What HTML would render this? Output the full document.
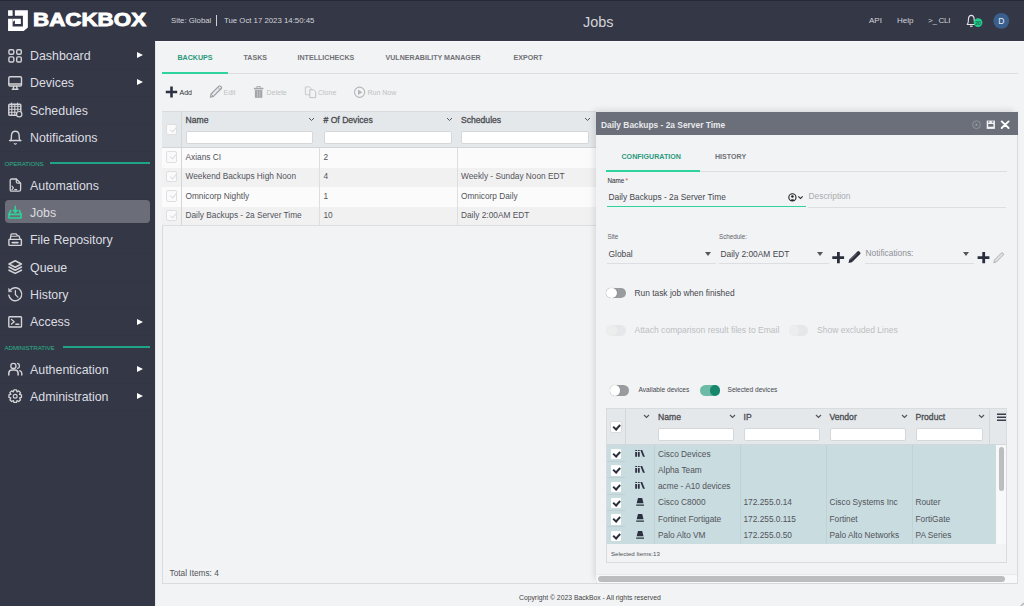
<!DOCTYPE html>
<html><head><meta charset="utf-8">
<style>
*{margin:0;padding:0;box-sizing:border-box}
html,body{width:1024px;height:606px;overflow:hidden;background:#f2f3f5;font-family:"Liberation Sans",sans-serif}
.a{position:absolute;white-space:nowrap}
#top{position:absolute;left:0;top:0;width:1024px;height:41px;background:#343746;border-top:1px solid #262834}
#side{position:absolute;left:0;top:41px;width:155px;height:565px;background:#343746}
.nav{position:absolute;left:0;width:155px;height:27px;border-bottom:1px solid #31343f}
.nt{left:30px;font-size:12.4px;line-height:14px;color:#dcdde1}
.ar{left:137px;width:0;height:0;border-left:6.4px solid #fff;border-top:3.85px solid transparent;border-bottom:3.85px solid transparent}
.nav svg{position:absolute;left:8px;top:6px}
.sec{position:absolute;left:4.5px;font-size:6.2px;color:#2bb38a;letter-spacing:-0.1px}
.secl{position:absolute;height:1.3px;background:#1fa583}
.tab{font-size:7.1px;font-weight:bold;color:#707175}
.tb{top:88.5px;font-size:7px;color:#c0c1c4}
.gh{font-size:8.6px;color:#4a4c52;-webkit-text-stroke:0.3px #4a4c52}
.gr{font-size:8.3px;color:#515359}
.fi{height:13px;background:#fff;border:1px solid #d5d8db;border-radius:2px}
.ck{width:11px;height:11.5px;background:#fafafa;border:1px solid #dedfe1;border-radius:2px}
.ck:after{content:"";position:absolute;left:2.6px;top:2.4px;width:5px;height:2.6px;border-left:1px solid #dcdde0;border-bottom:1px solid #dcdde0;transform:rotate(-50deg)}
.lb{font-size:6.3px;color:#606267}
.in{font-size:8.4px;color:#45474d}
.dd{width:0;height:0;border-top:4px solid #55575c;border-left:3.5px solid transparent;border-right:3.5px solid transparent}
.tg{width:19.5px;height:10.5px;border-radius:6px}
.tg i{position:absolute;left:0;top:0;width:10.5px;height:10.5px;border-radius:50%;background:#fff;box-shadow:0 0 1px rgba(0,0,0,.3)}
.ckd{width:10.4px;height:10.4px;background:#fff;border-radius:1px}
.ckd:after{content:"";position:absolute;left:2.3px;top:2.2px;width:5.4px;height:2.7px;border-left:2.1px solid #2b2e3c;border-bottom:2.1px solid #2b2e3c;transform:rotate(-48deg)}
</style></head><body>
<div id="top"></div>
<div id="side"></div>
<!-- logo -->
<svg class="a" style="left:0;top:0" width="160" height="41" viewBox="0 0 160 41">
<g fill="#fff">
<rect x="8.06" y="10.27" width="4.54" height="5.57"/>
<path d="M14.87 10.27 H27.86 V27.38 L23.7 30.89 H8.06 V18.72 H12.6 V26.56 H22.9 V15.84 H14.87 Z"/>
<path d="M12.6 18.72 H20.85 V24.08 H14.87 V20.37 L12.6 22 Z"/>
</g>
<text x="33" y="26.5" font-family="Liberation Sans" font-weight="bold" font-size="18.5" fill="#fff" stroke="#fff" stroke-width="0.9" transform="translate(33 0) scale(1.21 1) translate(-33 0)">BACKBOX</text>
</svg>
<div class="a" style="left:171px;top:16px;font-size:7.8px;color:#d2d3d8">Site: Global</div>
<div class="a" style="left:216px;top:15px;width:1px;height:11px;background:#cfd0d4"></div>
<div class="a" style="left:224px;top:16px;font-size:7.8px;color:#d2d3d8">Tue Oct 17 2023 14:50:45</div>
<div class="a" style="left:582.7px;top:12.6px;font-size:15.5px;color:#d3d4d8;transform:scaleX(0.93);transform-origin:0 0">Jobs</div>
<div class="a" style="left:869px;top:16px;font-size:8px;color:#d2d3d8">API</div>
<div class="a" style="left:897px;top:16px;font-size:8px;color:#d2d3d8">Help</div>
<div class="a" style="left:928px;top:16px;font-size:8px;color:#d2d3d8;letter-spacing:-0.25px">&gt;_ CLI</div>


<!-- main content -->
<div class="a" style="left:155px;top:41px;width:869px;height:565px;background:#f2f3f5;border-left:1px solid #e4e5e8;border-top:1px solid #f7f8f9"></div>
<div class="a tab" style="left:177.5px;top:54.3px;color:#2a9a7d">BACKUPS</div>
<div class="a tab" style="left:243.5px;top:54.3px">TASKS</div>
<div class="a tab" style="left:297.5px;top:54.3px">INTELLICHECKS</div>
<div class="a tab" style="left:385.5px;top:54.3px">VULNERABILITY MANAGER</div>
<div class="a tab" style="left:513.5px;top:54.3px">EXPORT</div>
<div class="a" style="left:162px;top:73px;width:856px;height:1px;background:#dcdee1"></div>
<div class="a" style="left:162px;top:72px;width:66px;height:2px;background:#2ed49c"></div>
<!-- toolbar -->
<svg class="a" style="left:165px;top:86px" width="13" height="12" viewBox="0 0 13 12"><path d="M5.2 0.6h2.6v4.1h4.4v2.6H7.8v4.1H5.2V7.3H0.8V4.7h4.4z" fill="#2d3142"/></svg>
<div class="a tb" style="left:179.5px;color:#333">Add</div>
<div class="a tb" style="left:223.5px">Edit</div>
<div class="a tb" style="left:266.5px">Delete</div>
<div class="a tb" style="left:318px">Clone</div>
<div class="a tb" style="left:367.5px">Run Now</div>

<svg class="a" style="left:200px;top:80px" width="200" height="22" viewBox="200 80 200 22">
<path d="M210.4 97.2 L211 94 L218.9 86.1 A1.1 1.1 0 0 1 220.5 86.1 L221.3 86.9 A1.1 1.1 0 0 1 221.3 88.5 L213.4 96.4 Z" fill="#e6e7e9" stroke="#9d9ea3" stroke-width="1.1" stroke-linejoin="round"/>
<path d="M211 94 L213.4 96.4 M217.8 87.2 L220.2 89.6" stroke="#9d9ea3" stroke-width="0.9"/>
<path d="M253.9 88.6 H263.3" stroke="#a3a4a8" stroke-width="1.6"/>
<path d="M256.8 87.8 V86.6 H260.4 V87.8" stroke="#a3a4a8" stroke-width="0.9" fill="none"/>
<rect x="254.9" y="90.1" width="7.4" height="7.7" fill="#a3a4a8"/>
<path d="M257.4 91 V97 M259.8 91 V97" stroke="#c6c7ca" stroke-width="0.9"/>
<path d="M305.4 86.9 H309.4 L311.3 88.8 V94.7 H305.4 Z" fill="none" stroke="#c8c9cc" stroke-width="1"/>
<path d="M309.8 89.8 H313.8 L315.7 91.7 V97.6 H309.8 Z" fill="#f2f3f5" stroke="#c0c1c4" stroke-width="1"/>
<circle cx="359.6" cy="92.25" r="5.1" fill="none" stroke="#b5b6ba" stroke-width="1.1"/>
<path d="M358 89.6 L362.3 92.25 L358 94.9 Z" fill="#b5b6ba"/>
</svg>

<!-- main grid -->
<div class="a" style="left:162px;top:111px;width:856px;height:472.8px;border:1px solid #d9dbde;border-top:0"></div>
<div class="a" style="left:162px;top:111px;width:434px;height:37px;background:#e4e8ea;border-top:1px solid #d8dcdf;border-bottom:1px solid #d3d7da"></div>
<div class="a" style="left:181px;top:111px;width:1px;height:114px;background:#d3d7da"></div>
<div class="a" style="left:319px;top:148px;width:1px;height:77px;background:#dcdfe2"></div>
<div class="a" style="left:457px;top:148px;width:1px;height:77px;background:#dcdfe2"></div>
<div class="a ck" style="left:166px;top:123.5px"></div>
<div class="a gh" style="left:185.5px;top:114.8px">Name</div>
<div class="a gh" style="left:323.5px;top:114.8px"># Of Devices</div>
<div class="a gh" style="left:461px;top:114.8px">Schedules</div>
<svg class="a" style="left:307.7px;top:116.5px" width="7" height="5" viewBox="0 0 7 5"><path d="M1 1l2.5 2.5L6 1" stroke="#55575c" stroke-width="1" fill="none"/></svg>
<svg class="a" style="left:445.7px;top:116.5px" width="7" height="5" viewBox="0 0 7 5"><path d="M1 1l2.5 2.5L6 1" stroke="#55575c" stroke-width="1" fill="none"/></svg>
<svg class="a" style="left:583.7px;top:116.5px" width="7" height="5" viewBox="0 0 7 5"><path d="M1 1l2.5 2.5L6 1" stroke="#55575c" stroke-width="1" fill="none"/></svg>
<div class="a fi" style="left:185.5px;top:131px;width:127.5px"></div>
<div class="a fi" style="left:323.5px;top:131px;width:128px"></div>
<div class="a fi" style="left:461px;top:131px;width:127.5px"></div>
<div class="a" style="left:162px;top:148px;width:434px;height:19.5px;background:#fbfbfb"></div>
<div class="a" style="left:162px;top:167.5px;width:434px;height:19.5px;background:#f1f1f2"></div>
<div class="a" style="left:162px;top:187px;width:434px;height:19.5px;background:#fbfbfb"></div>
<div class="a" style="left:162px;top:206.5px;width:434px;height:19px;background:#f1f1f2;border-bottom:1px solid #dcdfe2"></div>
<div class="a" style="left:181px;top:148px;width:1px;height:77px;background:#d3d7da"></div>
<div class="a" style="left:319px;top:148px;width:1px;height:77px;background:#dcdfe2"></div>
<div class="a" style="left:457px;top:148px;width:1px;height:77px;background:#dcdfe2"></div>
<div class="a ck" style="left:166px;top:151px"></div>
<div class="a ck" style="left:166px;top:170.5px"></div>
<div class="a ck" style="left:166px;top:190px"></div>
<div class="a ck" style="left:166px;top:209.5px"></div>
<div class="a gr" style="left:185.5px;top:151.5px">Axians CI</div><div class="a gr" style="left:323.5px;top:151.5px">2</div>
<div class="a gr" style="left:185.5px;top:171px">Weekend Backups High Noon</div><div class="a gr" style="left:323.5px;top:171px">4</div><div class="a gr" style="left:461px;top:171px">Weekly - Sunday Noon EDT</div>
<div class="a gr" style="left:185.5px;top:190.5px">Omnicorp Nightly</div><div class="a gr" style="left:323.5px;top:190.5px">1</div><div class="a gr" style="left:461px;top:190.5px">Omnicorp Daily</div>
<div class="a gr" style="left:185.5px;top:210px">Daily Backups - 2a Server Time</div><div class="a gr" style="left:323.5px;top:210px">10</div><div class="a gr" style="left:461px;top:210px">Daily 2:00AM EDT</div>
<div class="a gr" style="left:169.5px;top:568px">Total Items: 4</div>
<div class="a" style="left:519px;top:594.3px;font-size:6.8px;color:#444">Copyright © 2023 BackBox - All rights reserved</div>


<!-- right panel -->
<div class="a" style="left:596px;top:112px;width:422px;height:471px;background:#f2f3f5;border-right:1px solid #d9dbde;border-bottom:1px solid #d9dbde;box-shadow:-3px -3px 6px -1px rgba(0,0,0,0.11)"></div>
<div class="a" style="left:596px;top:112px;width:422px;height:22.5px;background:#6b6f7a"></div>
<div class="a" style="left:601px;top:119.8px;font-size:8.4px;font-weight:bold;color:#e8e9ec">Daily Backups - 2a Server Time</div>
<div class="a tab" style="left:621.5px;top:153.3px;color:#2a9a7d">CONFIGURATION</div>
<div class="a tab" style="left:715px;top:153.3px">HISTORY</div>
<div class="a" style="left:606px;top:171px;width:401px;height:1px;background:#dcdee1"></div>
<div class="a" style="left:606px;top:170px;width:94px;height:2px;background:#2ed49c"></div>
<div class="a lb" style="left:607.5px;top:177px;color:#3f4146;-webkit-text-stroke:0.1px #3f4146">Name<span style="color:#e0413a;-webkit-text-stroke:0;margin-left:1.2px">*</span></div>
<div class="a in" style="left:608.5px;top:192px">Daily Backups - 2a Server Time</div>
<div class="a" style="left:607px;top:205.5px;width:198.5px;height:1.6px;background:#2ed49c"></div>
<div class="a in" style="left:808.5px;top:191px;color:#a9abaf">Description</div>
<div class="a" style="left:808px;top:206.5px;width:198px;height:1px;background:#dcdee1"></div>
<div class="a lb" style="left:607.5px;top:233px">Site</div>
<div class="a lb" style="left:719px;top:233px">Schedule:</div>
<div class="a in" style="left:608.5px;top:249px">Global</div>
<div class="a dd" style="left:705px;top:251.5px"></div>
<div class="a" style="left:607px;top:262.5px;width:109px;height:1px;background:#dcdee1"></div>
<div class="a in" style="left:720.5px;top:249px">Daily 2:00AM EDT</div>
<div class="a dd" style="left:817px;top:251.5px"></div>
<div class="a" style="left:719px;top:262.5px;width:110px;height:1px;background:#dcdee1"></div>
<div class="a in" style="left:865.5px;top:248px;color:#8e9095">Notifications:</div>
<div class="a dd" style="left:962.5px;top:251.5px"></div>
<div class="a" style="left:865px;top:262.5px;width:109px;height:1px;background:#dcdee1"></div>

<svg class="a" style="left:780px;top:185px" width="240" height="85" viewBox="780 185 240 85">
<circle cx="792.4" cy="197.4" r="3.6" fill="none" stroke="#222" stroke-width="1.1"/>
<circle cx="792.4" cy="196.4" r="1.25" fill="#222"/>
<path d="M789.9 200.2 Q792.4 198.2 794.9 200.2 Q792.4 201.6 789.9 200.2 Z" fill="#222"/>
<path d="M798.3 196.3 L800.5 198.5 L802.7 196.3" fill="none" stroke="#333" stroke-width="1.1"/>
<path d="M837 251.9 h2.8 v4.3 h4.3 v2.8 h-4.3 v4.2 h-2.8 v-4.2 h-4.7 v-2.8 h4.7z" fill="#2b2e3c"/>
<path d="M848.5 263 L849.3 259.6 L857.4 251.6 A1.3 1.3 0 0 1 859.3 251.6 L860 252.3 A1.3 1.3 0 0 1 860 254.2 L851.9 262.2 Z" fill="#2b2e3c"/>
<path d="M850.6 259.8 L856.9 253.5" stroke="#9a9ca3" stroke-width="0.6"/>
<path d="M982.3 251.9 h2.8 v4.3 h4.3 v2.8 h-4.3 v4.2 h-2.8 v-4.2 h-4.7 v-2.8 h4.7z" fill="#2b2e3c"/>
<path d="M993.8 262.8 L994.4 260 L1001.3 253 A1 1 0 0 1 1002.8 253 L1003.3 253.5 A1 1 0 0 1 1003.3 255 L996.4 262 Z" fill="#dcdde0" stroke="#a8aaae" stroke-width="0.8"/>
</svg>

<!-- toggles -->
<div class="a tg" style="left:606px;top:287.5px;background:#9a9b9e"><i></i></div>
<div class="a in" style="left:634.5px;top:287.5px;color:#45474d">Run task job when finished</div>
<div class="a tg" style="left:606px;top:325px;background:#e6e7e9"><i style="background:#eceded;box-shadow:none"></i></div>
<div class="a in" style="left:634.5px;top:325px;color:#bdbec1;font-size:8.55px">Attach comparison result files to Email</div>
<div class="a tg" style="left:788.5px;top:325px;background:#e6e7e9"><i style="background:#eceded;box-shadow:none"></i></div>
<div class="a in" style="left:817px;top:325px;color:#bdbec1;font-size:8.55px">Show excluded Lines</div>
<div class="a tg" style="left:609.5px;top:385px;background:#9a9b9e"><i></i></div>
<div class="a" style="left:638.5px;top:386px;font-size:6.6px;color:#45474d">Available devices</div>
<div class="a tg" style="left:699.5px;top:385px;background:#6dbba7"><i style="left:10px;background:#17876b;box-shadow:none"></i></div>
<div class="a" style="left:727.5px;top:386px;font-size:6.6px;color:#45474d">Selected devices</div>



<svg class="a" style="left:965px;top:114px" width="50" height="20" viewBox="965 114 50 20">
<circle cx="976.5" cy="124.7" r="3.9" fill="none" stroke="#9a9da5" stroke-width="0.8"/>
<path d="M975.6 123 L978 124.7 L975.6 126.4 Z" fill="#9a9da5"/>
<rect x="986.7" y="120.6" width="8.2" height="8.3" fill="#f4f4f6"/>
<rect x="988.2" y="124" width="5.2" height="2.7" fill="#6b6f7a"/>
<rect x="988.2" y="121.4" width="1.2" height="1.3" fill="#6b6f7a"/>
<rect x="991.8" y="121.4" width="1.6" height="1.3" fill="#6b6f7a"/>
<path d="M1001.7 121.4 L1008.6 128 M1008.6 121.4 L1001.7 128" stroke="#fff" stroke-width="1.9" stroke-linecap="round"/>
</svg>

<!-- device grid -->
<div class="a" style="left:606px;top:408px;width:401px;height:155px;border:1px solid #d9dcdf;background:#f2f3f5"></div>
<div class="a" style="left:607px;top:409px;width:399px;height:36px;background:#e4e8ea;border-bottom:1px solid #d3d7da"></div>
<div class="a" style="left:625px;top:409px;width:1px;height:135px;background:#d3d7da"></div>
<div class="a" style="left:989px;top:409px;width:1px;height:36px;background:#d3d7da"></div>
<div class="a" style="left:607px;top:445px;width:389px;height:99px;background:#c9dce0"></div>
<div class="a" style="left:996px;top:445px;width:10px;height:99px;background:#f7f8f9"></div>
<div class="a" style="left:999px;top:446.5px;width:5px;height:44.5px;border-radius:3px;background:#bcbdbf"></div>
<div class="a ckd" style="left:610.8px;top:421.5px;box-shadow:0 0 0 0.8px #d5d8db"></div>
<svg class="a" style="left:643px;top:413.5px" width="7" height="5" viewBox="0 0 7 5"><path d="M1 1l2.5 2.5L6 1" stroke="#55575c" stroke-width="1.2" fill="none"/></svg>
<div class="a gh" style="left:658px;top:412px">Name</div>
<div class="a gh" style="left:743.5px;top:412px">IP</div>
<div class="a gh" style="left:829.5px;top:412px">Vendor</div>
<div class="a gh" style="left:915.5px;top:412px">Product</div>
<svg class="a" style="left:729px;top:413.5px" width="7" height="5" viewBox="0 0 7 5"><path d="M1 1l2.5 2.5L6 1" stroke="#55575c" stroke-width="1.2" fill="none"/></svg>
<svg class="a" style="left:814.5px;top:413.5px" width="7" height="5" viewBox="0 0 7 5"><path d="M1 1l2.5 2.5L6 1" stroke="#55575c" stroke-width="1.2" fill="none"/></svg>
<svg class="a" style="left:900.5px;top:413.5px" width="7" height="5" viewBox="0 0 7 5"><path d="M1 1l2.5 2.5L6 1" stroke="#55575c" stroke-width="1.2" fill="none"/></svg>
<svg class="a" style="left:978px;top:413.5px" width="7" height="5" viewBox="0 0 7 5"><path d="M1 1l2.5 2.5L6 1" stroke="#55575c" stroke-width="1.2" fill="none"/></svg>
<svg class="a" style="left:996.5px;top:413px" width="9" height="9" viewBox="0 0 9 9"><path d="M0 1.2h9M0 4.2h9M0 7.2h9" stroke="#3a3d4a" stroke-width="1.6"/></svg>
<div class="a fi" style="left:658px;top:428px;width:75.5px"></div>
<div class="a fi" style="left:743.5px;top:428px;width:76px"></div>
<div class="a fi" style="left:829.5px;top:428px;width:76px"></div>
<div class="a fi" style="left:915.5px;top:428px;width:67px"></div>
<div class="a" style="left:654px;top:445px;width:1px;height:99px;background:#c0d2d6"></div>
<div class="a" style="left:740px;top:445px;width:1px;height:99px;background:#c0d2d6"></div>
<div class="a" style="left:825.5px;top:445px;width:1px;height:99px;background:#c0d2d6"></div>
<div class="a" style="left:911.5px;top:445px;width:1px;height:99px;background:#c0d2d6"></div>
<div class="a" style="left:611px;top:550px;font-size:6.1px;color:#505257">Selected Items:13</div>
<div class="a ckd" style="left:610.7px;top:449.0px"></div><svg class="a" style="left:634.6px;top:449.8px" width="10" height="7" viewBox="0 0 10 7"><path d="M0.2 0h1.8v1.1H0.2zM0.2 1.9h1.8V6.8H0.2zM2.9 0h1.8v1.1H2.9zM2.9 1.9h1.8V6.8H2.9zM5.3 0.1h1.9l2.7 6.7H8z" fill="#2d3040"/></svg><div class="a gr" style="left:658px;top:448.5px">Cisco Devices</div>
<div class="a" style="left:607px;top:461.0px;width:18px;height:1px;background:#bfd0d4"></div><div class="a ckd" style="left:610.7px;top:465.3px"></div><svg class="a" style="left:634.6px;top:466.1px" width="10" height="7" viewBox="0 0 10 7"><path d="M0.2 0h1.8v1.1H0.2zM0.2 1.9h1.8V6.8H0.2zM2.9 0h1.8v1.1H2.9zM2.9 1.9h1.8V6.8H2.9zM5.3 0.1h1.9l2.7 6.7H8z" fill="#2d3040"/></svg><div class="a gr" style="left:658px;top:464.8px">Alpha Team</div>
<div class="a" style="left:607px;top:477.3px;width:18px;height:1px;background:#bfd0d4"></div><div class="a ckd" style="left:610.7px;top:481.6px"></div><svg class="a" style="left:634.6px;top:482.4px" width="10" height="7" viewBox="0 0 10 7"><path d="M0.2 0h1.8v1.1H0.2zM0.2 1.9h1.8V6.8H0.2zM2.9 0h1.8v1.1H2.9zM2.9 1.9h1.8V6.8H2.9zM5.3 0.1h1.9l2.7 6.7H8z" fill="#2d3040"/></svg><div class="a gr" style="left:658px;top:481.1px">acme - A10 devices</div>
<div class="a" style="left:607px;top:493.6px;width:18px;height:1px;background:#bfd0d4"></div><div class="a ckd" style="left:610.7px;top:497.9px"></div><svg class="a" style="left:635.9px;top:497.9px" width="8.2" height="8" viewBox="0 0 8.2 8"><path d="M2 0h4.2l1.3 5.3H0.7z M0.2 6.4h7.8V7.8H0.2z" fill="#2d3040"/></svg><div class="a gr" style="left:658px;top:497.4px">Cisco C8000</div><div class="a gr" style="left:743.5px;top:497.4px">172.255.0.14</div><div class="a gr" style="left:829.5px;top:497.4px">Cisco Systems Inc</div><div class="a gr" style="left:915.5px;top:497.4px">Router</div>
<div class="a" style="left:607px;top:509.9px;width:18px;height:1px;background:#bfd0d4"></div><div class="a ckd" style="left:610.7px;top:514.2px"></div><svg class="a" style="left:635.9px;top:514.2px" width="8.2" height="8" viewBox="0 0 8.2 8"><path d="M2 0h4.2l1.3 5.3H0.7z M0.2 6.4h7.8V7.8H0.2z" fill="#2d3040"/></svg><div class="a gr" style="left:658px;top:513.7px">Fortinet Fortigate</div><div class="a gr" style="left:743.5px;top:513.7px">172.255.0.115</div><div class="a gr" style="left:829.5px;top:513.7px">Fortinet</div><div class="a gr" style="left:915.5px;top:513.7px">FortiGate</div>
<div class="a" style="left:607px;top:526.2px;width:18px;height:1px;background:#bfd0d4"></div><div class="a ckd" style="left:610.7px;top:530.5px"></div><svg class="a" style="left:635.9px;top:530.5px" width="8.2" height="8" viewBox="0 0 8.2 8"><path d="M2 0h4.2l1.3 5.3H0.7z M0.2 6.4h7.8V7.8H0.2z" fill="#2d3040"/></svg><div class="a gr" style="left:658px;top:530.0px">Palo Alto VM</div><div class="a gr" style="left:743.5px;top:530.0px">172.255.0.50</div><div class="a gr" style="left:829.5px;top:530.0px">Palo Alto Networks</div><div class="a gr" style="left:915.5px;top:530.0px">PA Series</div>

<div class="a" style="left:597px;top:573.5px;width:420px;height:9.5px;background:#f8f9fa;border-top:1px solid #e8e9eb"></div>
<div class="a" style="left:597.5px;top:576px;width:407.5px;height:5.5px;border-radius:3px;background:#bcbdbf"></div>


<svg class="a" style="left:960px;top:10px" width="56" height="22" viewBox="960 10 56 22">
<path d="M967.2 24.5 C968.6 23.3 968.3 21.5 968.4 19.5 C968.5 17 969.6 15.4 971.3 15.4 C973 15.4 974.1 17 974.2 19.5 C974.3 21.5 974 23.3 975.4 24.5 Z" fill="none" stroke="#e6e7ea" stroke-width="1.1" stroke-linejoin="round"/>
<path d="M970 26.2 h2.6" stroke="#e6e7ea" stroke-width="1.2"/>
<circle cx="978.1" cy="22.6" r="4.3" fill="#1fd08d"/>
<text x="978.1" y="24.6" font-family="Liberation Sans" font-size="5.2" font-weight="bold" fill="#226a4f" text-anchor="middle">20</text>
<circle cx="1001.3" cy="20.8" r="7.9" fill="#3b5f8d"/>
<text x="1001.4" y="24" font-family="Liberation Sans" font-size="8.6" fill="#e9eef5" text-anchor="middle">D</text>
</svg>

<svg class="a" style="left:1014px;top:596px" width="10" height="10" viewBox="0 0 10 10"><path d="M10 7 L7 10" stroke="#b9babd" stroke-width="1.6"/></svg>
<!-- sidebar -->
<div class="a" style="left:0;top:69.00px;width:155px;height:1px;background:#323543"></div>
<div class="a" style="left:0;top:96.00px;width:155px;height:1px;background:#323543"></div>
<div class="a" style="left:0;top:123.50px;width:155px;height:1px;background:#323543"></div>
<div class="a" style="left:0;top:150.50px;width:155px;height:1px;background:#323543"></div>
<div class="a" style="left:0;top:198.75px;width:155px;height:1px;background:#323543"></div>
<div class="a" style="left:0;top:253.00px;width:155px;height:1px;background:#323543"></div>
<div class="a" style="left:0;top:280.50px;width:155px;height:1px;background:#323543"></div>
<div class="a" style="left:0;top:308.00px;width:155px;height:1px;background:#323543"></div>
<div class="a" style="left:0;top:335.20px;width:155px;height:1px;background:#323543"></div>
<div class="a" style="left:0;top:382.50px;width:155px;height:1px;background:#323543"></div>
<div class="a" style="left:0;top:409.70px;width:155px;height:1px;background:#323543"></div>
<div class="a" style="left:4.5px;top:200.2px;width:145.5px;height:23.2px;border-radius:4px;background:#6b6e78"></div>
<div class="a nt" style="top:49.00px">Dashboard</div>
<i class="a ar" style="top:52.45px"></i>
<div class="a nt" style="top:76.00px">Devices</div>
<i class="a ar" style="top:79.45px"></i>
<div class="a nt" style="top:103.50px">Schedules</div>
<div class="a nt" style="top:130.50px">Notifications</div>
<div class="a nt" style="top:178.75px">Automations</div>
<div class="a nt" style="top:205.50px" style="color:#2ed19c">Jobs</div>
<div class="a nt" style="top:233.00px">File Repository</div>
<div class="a nt" style="top:260.50px">Queue</div>
<div class="a nt" style="top:288.00px">History</div>
<div class="a nt" style="top:315.20px">Access</div>
<i class="a ar" style="top:318.65px"></i>
<div class="a nt" style="top:362.50px">Authentication</div>
<i class="a ar" style="top:365.95px"></i>
<div class="a nt" style="top:389.70px">Administration</div>
<i class="a ar" style="top:393.15px"></i>
<div class="sec" style="top:159.5px">OPERATIONS</div><div class="secl" style="left:50px;top:162.3px;width:100px"></div>
<div class="sec" style="top:343.5px">ADMINISTRATIVE</div><div class="secl" style="left:62.5px;top:346.4px;width:87.5px"></div>
<svg class="a" style="left:0;top:0" width="155" height="606" viewBox="0 0 155 606" fill="none" stroke="#d3d4d8" stroke-width="1.4" stroke-linejoin="round" stroke-linecap="round">
<rect x="8.9" y="49.8" width="4.9" height="4.4" rx="1.3"/>
<rect x="16.7" y="49.8" width="4.6" height="4.4" rx="1.3"/>
<rect x="8.9" y="56.9" width="4.9" height="5.1" rx="1.3"/>
<rect x="16.7" y="56.9" width="4.6" height="5.1" rx="1.3"/>
<rect x="8.8" y="76.7" width="12.7" height="9.3" rx="1.3"/>
<path d="M8.8 84 H21.5 M13.6 86.5 L13.3 89.2 M16.7 86.5 L17 89.2 M12.3 89.3 H18"/>
<rect x="8.8" y="104.2" width="12" height="11" rx="0.8"/>
<path d="M8.8 106.2 H20.8 M8.8 109.2 H20.8 M8.8 112.2 H16.5 M11.8 104.2 V115.2 M14.8 104.2 V115.2 M17.8 104.2 V111" stroke-width="1.1"/>
<path d="M11.6 103 V104.5 M17.6 103 V104.5" stroke-width="1"/>
<circle cx="19.2" cy="114.2" r="2.7" fill="#343746" stroke-width="1.2"/>
<path d="M9.6 140.6 H20.9" stroke-width="1.5"/>
<path d="M10.7 140.6 C11.6 139 11.4 136.8 11.5 135 C11.8 132.6 13.4 131.3 15.3 131.3 C17.2 131.3 18.8 132.6 19.1 135 C19.2 136.8 19 139 19.9 140.6"/>
<path d="M14.3 143.6 Q15.3 144.5 16.3 143.6" stroke-width="1.2"/>
<path d="M11.5 179 H16.3 L20.6 183.3 V189.8 A1.4 1.4 0 0 1 19.2 191.2 H11.5 A1.3 1.3 0 0 1 10.2 189.9 V180.3 A1.3 1.3 0 0 1 11.5 179 Z" stroke-width="1.3"/>
<path d="M16.3 179.2 V181.7 A1.5 1.5 0 0 0 17.8 183.2 H20.4" stroke-width="1.2"/>
<path d="M12 186.2 L13.4 187.9 L12 189.6 M14.7 189.6 H16.6" stroke-width="1.2"/>
<g stroke="#2dd29a" stroke-width="1.6">
<path d="M10.8 210.4 L9 214.2 V218 H21 V214.2 L19.3 210.4"/>
<path d="M9.2 214.4 H20.8"/>
<path d="M15.3 206.4 V212 M13.5 210.4 L15.3 212.3 L17.1 210.4"/>
</g>
<rect x="8.9" y="239.4" width="12.5" height="6" rx="0.6"/>
<path d="M12.3 242.6 H17.9" stroke-width="1.6"/>
<path d="M10.2 239.2 L11 234.6 Q11.2 233.8 12 233.8 H15.8 Q16.5 233.8 16.7 234.6 L17.2 235.8 H18.9 L20.2 239.2" stroke-width="1.3"/>
<path d="M11.3 236.3 H16.3" stroke-width="1.1"/>
<path d="M9 264 L15.2 260.8 L21.4 264 L15.2 267.2 Z M9 267 L15.2 270.3 L21.4 267 M9 270.2 L15.2 273.4 L21.4 270.2" stroke-width="1.6"/>
<path d="M8.8 295.2 A6.5 6.5 0 1 0 10.8 289.5" stroke-width="1.4"/>
<path d="M8.9 288.6 L11.9 291.6 L8.9 291.8 Z" fill="#d3d4d8" stroke-width="0.6"/>
<path d="M15.4 290.6 V294.6 L17.9 297.1" stroke-width="1.3"/>
<rect x="8.8" y="316.7" width="12.7" height="10.3" rx="0.8"/>
<path d="M11.5 319.5 L14.2 321.8 L11.5 324.1" stroke-width="1.3"/>
<path d="M15.9 324.3 H18.7" stroke-width="1.6"/>
<circle cx="13.4" cy="365.9" r="2.6" stroke-width="1.3"/>
<path d="M8.8 375 V373 A3.2 3.2 0 0 1 12 369.9 H14.9 A3.2 3.2 0 0 1 18.1 373 V375" stroke-width="1.5"/>
<path d="M17.6 363.4 A2.6 2.6 0 0 1 17.6 368.4" stroke-width="1.3"/>
<path d="M19.7 370.6 A3 3 0 0 1 21.8 373.3 V375" stroke-width="1.4"/>
<path d="M13.41 391.85 L13.93 389.93 L16.47 389.93 L16.99 391.85 L17.01 391.86 L18.74 390.87 L20.53 392.66 L19.54 394.39 L19.55 394.41 L21.47 394.93 L21.47 397.47 L19.55 397.99 L19.54 398.01 L20.53 399.74 L18.74 401.53 L17.01 400.54 L16.99 400.55 L16.47 402.47 L13.93 402.47 L13.41 400.55 L13.39 400.54 L11.66 401.53 L9.87 399.74 L10.86 398.01 L10.85 397.99 L8.93 397.47 L8.93 394.93 L10.85 394.41 L10.86 394.39 L9.87 392.66 L11.66 390.87 L13.39 391.86 Z" stroke-width="1.3"/>
<circle cx="15.2" cy="396.2" r="1.9" stroke-width="1.2"/>
</svg>

</body></html>
